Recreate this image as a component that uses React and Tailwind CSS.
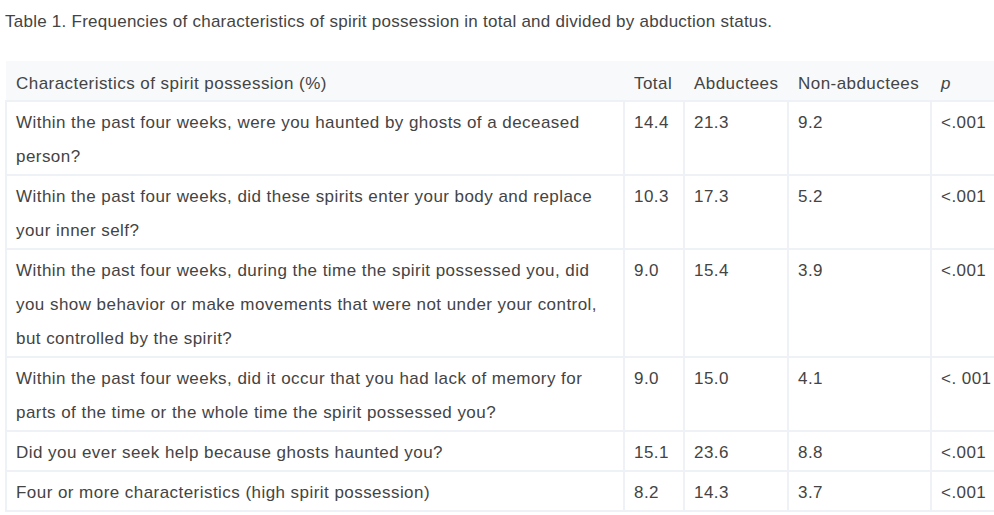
const rows = [
  {
    label:
      "Within the past four weeks, were you haunted by ghosts of a deceased person?",
    total: "14.4",
    abd: "21.3",
    non: "9.2",
    p: "<.001",
  },
  {
    label:
      "Within the past four weeks, did these spirits enter your body and replace your inner self?",
    total: "10.3",
    abd: "17.3",
    non: "5.2",
    p: "<.001",
  },
  {
    label:
      "Within the past four weeks, during the time the spirit possessed you, did you show behavior or make movements that were not under your control, but controlled by the spirit?",
    total: "9.0",
    abd: "15.4",
    non: "3.9",
    p: "<.001",
  },
  {
    label:
      "Within the past four weeks, did it occur that you had lack of memory for parts of the time or the whole time the spirit possessed you?",
    total: "9.0",
    abd: "15.0",
    non: "4.1",
    p: "<. 001",
  },
  {
    label: "Did you ever seek help because ghosts haunted you?",
    total: "15.1",
    abd: "23.6",
    non: "8.8",
    p: "<.001",
  },
  {
    label: "Four or more characteristics (high spirit possession)",
    total: "8.2",
    abd: "14.3",
    non: "3.7",
    p: "<.001",
  },
];

export default function App() {
  const td =
    "border-2 border-[#eef2f6] px-[9px] pt-[4px] pb-0 align-top leading-[34px]";
  const th = "px-[10px] pt-[7px] pb-0 text-left font-normal leading-[32px]";

  return (
    <div
      className="w-[994px] h-[515px] overflow-hidden bg-white text-[#444]"
      style={{ fontFamily: '"Liberation Sans", Arial, sans-serif' }}
    >
      <p className="pl-[5px] pt-[12px] text-[17px] leading-[20px] tracking-[0.25px]">
        Table 1. Frequencies of characteristics of spirit possession in total
        and divided by abduction status.
      </p>

      <table className="ml-[5px] mt-[29px] w-[1010px] table-fixed border-collapse text-[17px] tracking-[0.45px]">
        <colgroup>
          <col className="w-[618px]" />
          <col className="w-[60px]" />
          <col className="w-[104px]" />
          <col className="w-[143px]" />
          <col className="w-[85px]" />
        </colgroup>
        <thead>
          <tr className="bg-[#f7f9fb]">
            <th className={th}>Characteristics of spirit possession (%)</th>
            <th className={th}>Total</th>
            <th className={th}>Abductees</th>
            <th className={th}>Non-abductees</th>
            <th className={th}>
              <i>p</i>
            </th>
          </tr>
        </thead>
        <tbody>
          {rows.map((r) => (
            <tr key={r.label}>
              <td className={td}>{r.label}</td>
              <td className={td}>{r.total}</td>
              <td className={td}>{r.abd}</td>
              <td className={td}>{r.non}</td>
              <td className={td}>{r.p}</td>
            </tr>
          ))}
        </tbody>
      </table>
    </div>
  );
}
